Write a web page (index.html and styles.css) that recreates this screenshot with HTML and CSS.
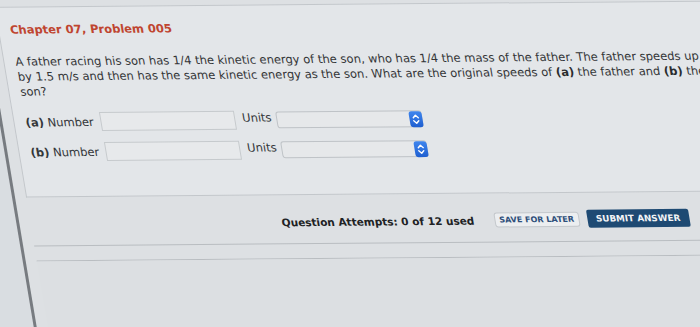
FILE: index.html
```html
<!DOCTYPE html>
<html lang="en">
<head>
<meta charset="utf-8">
<title>Chapter 07, Problem 005</title>
<link rel="stylesheet" href="styles.css">
</head>
<body>
<div class="screen">
  <section class="question">
    <h1 class="title">Chapter 07, Problem 005</h1>
    <p class="text">A father racing his son has 1/4 the kinetic energy of the son, who has 1/4 the mass of the father. The father speeds up by 1.5 m/s and then has the same kinetic energy as the son. What are the original speeds of <b>(a)</b> the father and <b>(b)</b> the son?</p>
    <div class="answers">
      <div class="row">
        <label class="label"><b>(a)</b> Number</label>
        <span class="input"></span>
        <span class="units">Units</span>
        <span class="select">
          <span class="stepper"><svg viewBox="0 0 13 16" width="13" height="16"><path d="M4 6.5 L6.5 4 L9 6.5 M4 9.5 L6.5 12 L9 9.5" fill="none" stroke="#fff" stroke-width="1.4" stroke-linecap="round" stroke-linejoin="round"/></svg></span>
        </span>
      </div>
      <div class="row">
        <label class="label"><b>(b)</b> Number</label>
        <span class="input"></span>
        <span class="units">Units</span>
        <span class="select">
          <span class="stepper"><svg viewBox="0 0 13 16" width="13" height="16"><path d="M4 6.5 L6.5 4 L9 6.5 M4 9.5 L6.5 12 L9 9.5" fill="none" stroke="#fff" stroke-width="1.4" stroke-linecap="round" stroke-linejoin="round"/></svg></span>
        </span>
      </div>
    </div>
  </section>
  <div class="footer">
    <span class="attempts">Question Attempts: 0 of 12 used</span>
    <button class="btn-save">SAVE FOR LATER</button>
    <button class="btn-submit">SUBMIT ANSWER</button>
  </div>
  <div class="strip"></div>
  <div class="rest"></div>
</div>
</body>
</html>
```
FILE: styles.css
```css
html, body {
  margin: 0;
  padding: 0;
}
body {
  width: 700px;
  height: 327px;
  overflow: hidden;
  background: #d9dde1;
  font-family: "DejaVu Sans", Verdana, sans-serif;
  color: #2f3133;
}
.screen {
  transform-origin: 0 0;
  transform: rotate(-0.5deg) skewX(9deg);
  margin-left: -21px;
  width: 790px;
  height: 380px;
  border-left: 3px solid #777b80;
  padding-top: 7px;
  padding-left: 11px;
  box-sizing: border-box;
  background: #dde0e3;
}
.question {
  border: 1px solid #c3c7cb;
  border-right: none;
  background: #e3e6e9;
  padding: 0 0 32px 11px;
  height: 191px;
  box-sizing: border-box;
}
.title {
  margin: 15px 0 0;
  font-size: 11.5px;
  line-height: 14px;
  font-weight: bold;
  color: #bf4530;
}
.text {
  margin: 18px 0 0;
  width: 698px;
  font-size: 11.5px;
  line-height: 15px;
  color: #333537;
}
.text b {
  color: #2a2c2e;
}
.answers {
  margin-top: 13px;
  display: flex;
  flex-direction: column;
  gap: 11px;
}
.row {
  display: flex;
  align-items: center;
  height: 19px;
  font-size: 11.5px;
  color: #34373a;
}
.label {
  width: 75px;
  flex: none;
}
.input {
  width: 135px;
  height: 19px;
  box-sizing: border-box;
  border: 1px solid #c6cacd;
  background: #e7e9eb;
  flex: none;
}
.units {
  margin-left: 7px;
  width: 34px;
  align-self: flex-start;
  line-height: 14px;
  flex: none;
}
.select {
  width: 146px;
  height: 17px;
  box-sizing: border-box;
  border: 1px solid #bfc3c7;
  border-radius: 3px;
  background: #e6e8ea;
  display: flex;
  justify-content: flex-end;
  align-items: center;
  flex: none;
}
.stepper {
  width: 13px;
  height: 16px;
  margin-right: -1px;
  border-radius: 3px;
  background: linear-gradient(#3f86ee, #1f5fd0);
  display: flex;
}
.footer {
  display: flex;
  align-items: center;
  height: 49px;
  padding: 4px 0 0 251px;
  box-sizing: border-box;
  border-bottom: 1px solid #b9bdc1;
}
.attempts {
  font-size: 10.5px;
  font-weight: bold;
  color: #202224;
  margin-top: 2px;
}
.btn-save {
  margin-left: 20px;
  width: 85px;
  height: 15px;
  padding: 0;
  border: 1px solid #c4c8cc;
  border-radius: 3px;
  background: #eceef0;
  color: #2e4f7a;
  font-family: "DejaVu Sans", Verdana, sans-serif;
  font-weight: bold;
  font-size: 8px;
  line-height: 13px;
}
.btn-submit {
  margin-left: 8px;
  width: 102px;
  height: 18px;
  padding: 0;
  border: none;
  border-radius: 2px;
  background: #1e4a73;
  color: #f2f4f6;
  font-family: "DejaVu Sans", Verdana, sans-serif;
  font-weight: bold;
  font-size: 8.8px;
  line-height: 18px;
}
.strip {
  height: 14px;
  border-bottom: 1px solid #b9bdc1;
}
.rest {
  height: 120px;
  background: #dcdfe2;
}
```
